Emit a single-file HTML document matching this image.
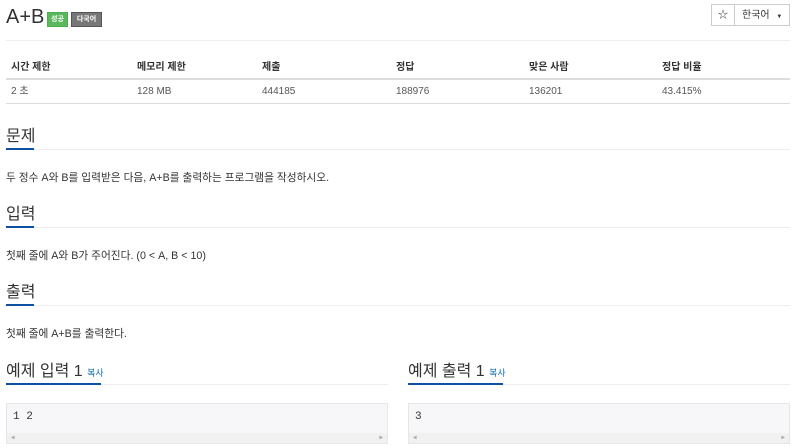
<!DOCTYPE html>
<html><head><meta charset="utf-8"><style>
body{margin:0;width:800px;height:448px;overflow:hidden;background:#fff;font-family:"Liberation Sans","Noto Sans CJK KR",sans-serif;color:#333;position:relative}
.a{position:absolute;white-space:nowrap;line-height:14px}
.sm{font-size:10.7px;color:#333}
.th{font-size:10px;font-weight:bold;color:#333}
.td{font-size:10px;color:#555}
.h{font-size:16px;color:#333;line-height:22px}
.line{position:absolute;height:1px;background:#eee}
.blue{position:absolute;height:2px;background:#0d4fa0}
.pre{position:absolute;background:#f7f7f9;border:1px solid #e6e6e6;font-family:"Liberation Mono",monospace;font-size:11px;color:#333}
.sb{position:absolute;left:0;right:0;bottom:0;height:10px;background:#f1f1f1;font-size:6px;color:#aaa}
</style></head><body>
<div class="a" style="left:6px;top:5px;font-size:20px;line-height:24px;color:#333">A+B</div>
<div class="a" style="left:47px;top:12px;width:21px;height:15px;background:#5cb85c;border:1px solid #4cae4c;box-sizing:border-box;color:#fff;font-size:7px;font-weight:bold;text-align:center;line-height:13px">성공</div>
<div class="a" style="left:71px;top:12px;width:31px;height:15px;background:#777;border:1px solid #555;box-sizing:border-box;color:#fff;font-size:7px;font-weight:bold;text-align:center;line-height:13px">다국어</div>
<div class="a" style="left:711px;top:4px;width:24px;height:22px;border:1px solid #ccc;box-sizing:border-box;font-size:10px;text-align:center;line-height:14px;padding-top:4px">☆</div>
<div class="a" style="left:734px;top:4px;width:56px;height:22px;border:1px solid #ccc;box-sizing:border-box;font-size:10px;line-height:14px;padding-top:4px;padding-left:7px">한국어 <span style="font-size:6px;margin-left:4px">▼</span></div>
<div class="line" style="left:6px;width:784px;top:40px"></div>
<div class="a th" style="left:11px;top:61px">시간 제한</div>
<div class="a th" style="left:137px;top:61px">메모리 제한</div>
<div class="a th" style="left:262px;top:61px">제출</div>
<div class="a th" style="left:396px;top:61px">정답</div>
<div class="a th" style="left:529px;top:61px">맞은 사람</div>
<div class="a th" style="left:662px;top:61px">정답 비율</div>
<div class="line" style="left:6px;width:784px;top:78px;height:2px;background:#ddd"></div>
<div class="a td" style="left:11px;top:85px">2 초</div>
<div class="a td" style="left:137px;top:85px">128 MB</div>
<div class="a td" style="left:262px;top:85px">444185</div>
<div class="a td" style="left:396px;top:85px">188976</div>
<div class="a td" style="left:529px;top:85px">136201</div>
<div class="a td" style="left:662px;top:85px">43.415%</div>
<div class="line" style="left:6px;width:784px;top:103px;background:#ddd"></div>

<div class="a h" style="left:6px;top:126px">문제</div>
<div class="line" style="left:6px;width:784px;top:149px"></div><div class="blue" style="left:6px;width:28px;top:148px"></div>
<div class="a sm" style="left:6px;top:171px">두 정수 A와 B를 입력받은 다음, A+B를 출력하는 프로그램을 작성하시오.</div>

<div class="a h" style="left:6px;top:204px">입력</div>
<div class="line" style="left:6px;width:784px;top:227px"></div><div class="blue" style="left:6px;width:28px;top:226px"></div>
<div class="a sm" style="left:6px;top:249px">첫째 줄에 A와 B가 주어진다. (0 &lt; A, B &lt; 10)</div>

<div class="a h" style="left:6px;top:282px">출력</div>
<div class="line" style="left:6px;width:784px;top:305px"></div><div class="blue" style="left:6px;width:28px;top:304px"></div>
<div class="a sm" style="left:6px;top:327px">첫째 줄에 A+B를 출력한다.</div>

<div class="a h" style="left:6px;top:361px">예제 입력 1 <span style="font-size:9px;color:#0d6ab8">복사</span></div>
<div class="line" style="left:6px;width:382px;top:384px"></div><div class="blue" style="left:6px;width:95px;top:383px"></div>
<div class="pre" style="left:6px;top:403px;width:380px;height:39px"><div style="position:absolute;left:6px;top:7px">1 2</div><div class="sb"><span style="position:absolute;left:4px;top:1px">◀</span><span style="position:absolute;right:4px;top:1px">▶</span></div></div>

<div class="a h" style="left:408px;top:361px">예제 출력 1 <span style="font-size:9px;color:#0d6ab8">복사</span></div>
<div class="line" style="left:408px;width:382px;top:384px"></div><div class="blue" style="left:408px;width:95px;top:383px"></div>
<div class="pre" style="left:408px;top:403px;width:380px;height:39px"><div style="position:absolute;left:6px;top:7px">3</div><div class="sb"><span style="position:absolute;left:4px;top:1px">◀</span><span style="position:absolute;right:4px;top:1px">▶</span></div></div>
</body></html>
